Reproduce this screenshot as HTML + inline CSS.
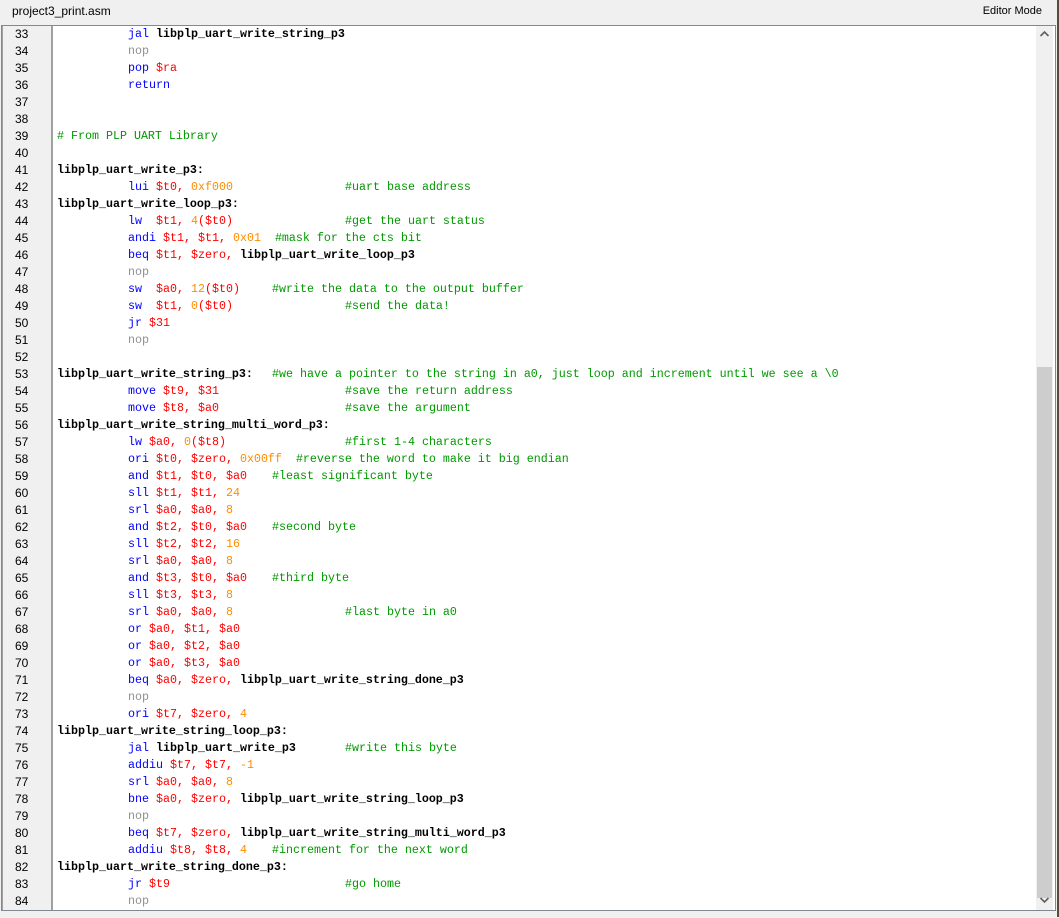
<!DOCTYPE html>
<html><head><meta charset="utf-8"><style>
*{margin:0;padding:0;box-sizing:border-box}
body{width:1059px;height:917px;background:#f0f0f0;position:relative;overflow:hidden;font-family:"Liberation Sans",sans-serif}
#title{position:absolute;left:12px;top:4px;font-size:12px;color:#000}
#mode{position:absolute;right:17px;top:5px;font-size:11px;color:#000}
#frame{position:absolute;left:1px;top:25px;width:1055px;height:886px;border:1px solid #828790;background:#fff}
#gut{position:absolute;left:2px;top:26px;width:51px;height:884px;background:#f0f0f0;border-left:1px solid #a0a0a0;border-right:2px solid #a0a0a0}
.ln{position:absolute;left:0;width:100%;height:17px;line-height:17px;font:12px "Liberation Sans",sans-serif;color:#000;padding-left:12px;transform:translateY(1px)}
#code{position:absolute;left:0;top:1px;width:1059px;height:917px}
.cl{position:absolute;left:57px;height:17px;line-height:17px;font-family:"Liberation Mono",monospace;font-size:11.67px;white-space:pre;color:#000}
.i{color:#0000ff}.r{color:#ff0000}.n{color:#ff8c00}.c{color:#009900}.p{color:#909090}.l{font-weight:bold}
#sb{position:absolute;left:1036px;top:26px;width:17px;height:884px;background:#f0f0f0}
#th{position:absolute;left:1037px;top:367px;width:15px;height:531px;background:#cdcdcd}
#rb{position:absolute;left:1057px;top:0;width:2px;height:917px;background:#5a4a3a}
</style></head><body>
<div id="title">project3_print.asm</div><div id="mode">Editor Mode</div>
<div id="frame"></div>
<div id="gut">
<div class="ln" style="top:0">33</div><div class="ln" style="top:17px">34</div><div class="ln" style="top:34px">35</div><div class="ln" style="top:51px">36</div><div class="ln" style="top:68px">37</div><div class="ln" style="top:85px">38</div><div class="ln" style="top:102px">39</div><div class="ln" style="top:119px">40</div><div class="ln" style="top:136px">41</div><div class="ln" style="top:153px">42</div><div class="ln" style="top:170px">43</div><div class="ln" style="top:187px">44</div><div class="ln" style="top:204px">45</div><div class="ln" style="top:221px">46</div><div class="ln" style="top:238px">47</div><div class="ln" style="top:255px">48</div><div class="ln" style="top:272px">49</div><div class="ln" style="top:289px">50</div><div class="ln" style="top:306px">51</div><div class="ln" style="top:323px">52</div><div class="ln" style="top:340px">53</div><div class="ln" style="top:357px">54</div><div class="ln" style="top:374px">55</div><div class="ln" style="top:391px">56</div><div class="ln" style="top:408px">57</div><div class="ln" style="top:425px">58</div><div class="ln" style="top:442px">59</div><div class="ln" style="top:459px">60</div><div class="ln" style="top:476px">61</div><div class="ln" style="top:493px">62</div><div class="ln" style="top:510px">63</div><div class="ln" style="top:527px">64</div><div class="ln" style="top:544px">65</div><div class="ln" style="top:561px">66</div><div class="ln" style="top:578px">67</div><div class="ln" style="top:595px">68</div><div class="ln" style="top:612px">69</div><div class="ln" style="top:629px">70</div><div class="ln" style="top:646px">71</div><div class="ln" style="top:663px">72</div><div class="ln" style="top:680px">73</div><div class="ln" style="top:697px">74</div><div class="ln" style="top:714px">75</div><div class="ln" style="top:731px">76</div><div class="ln" style="top:748px">77</div><div class="ln" style="top:765px">78</div><div class="ln" style="top:782px">79</div><div class="ln" style="top:799px">80</div><div class="ln" style="top:816px">81</div><div class="ln" style="top:833px">82</div><div class="ln" style="top:850px">83</div><div class="ln" style="top:867px">84</div>
</div>
<div id="code">
<div class="cl" style="top:25px;left:128px"><span class="i">jal</span> <span class="l">libplp_uart_write_string_p3</span></div>
<div class="cl p" style="top:42px;left:128px">nop</div>
<div class="cl" style="top:59px;left:128px"><span class="i">pop</span> <span class="r">$ra</span></div>
<div class="cl i" style="top:76px;left:128px">return</div>
<div class="cl c" style="top:127px"># From PLP UART Library</div>
<div class="cl l" style="top:161px">libplp_uart_write_p3:</div>
<div class="cl" style="top:178px;left:128px"><span class="i">lui</span> <span class="r">$t0,</span> <span class="n">0xf000</span></div><div class="cl c" style="top:178px;left:345px">#uart base address</div>
<div class="cl l" style="top:195px">libplp_uart_write_loop_p3:</div>
<div class="cl" style="top:212px;left:128px"><span class="i">lw</span>  <span class="r">$t1,</span> <span class="n">4</span><span class="r">($t0)</span></div><div class="cl c" style="top:212px;left:345px">#get the uart status</div>
<div class="cl" style="top:229px;left:128px"><span class="i">andi</span> <span class="r">$t1, $t1,</span> <span class="n">0x01</span>  <span class="c">#mask for the cts bit</span></div>
<div class="cl" style="top:246px;left:128px"><span class="i">beq</span> <span class="r">$t1, $zero,</span> <span class="l">libplp_uart_write_loop_p3</span></div>
<div class="cl p" style="top:263px;left:128px">nop</div>
<div class="cl" style="top:280px;left:128px"><span class="i">sw</span>  <span class="r">$a0,</span> <span class="n">12</span><span class="r">($t0)</span></div><div class="cl c" style="top:280px;left:272px">#write the data to the output buffer</div>
<div class="cl" style="top:297px;left:128px"><span class="i">sw</span>  <span class="r">$t1,</span> <span class="n">0</span><span class="r">($t0)</span></div><div class="cl c" style="top:297px;left:345px">#send the data!</div>
<div class="cl" style="top:314px;left:128px"><span class="i">jr</span> <span class="r">$31</span></div>
<div class="cl p" style="top:331px;left:128px">nop</div>
<div class="cl l" style="top:365px">libplp_uart_write_string_p3:</div><div class="cl c" style="top:365px;left:272px">#we have a pointer to the string in a0, just loop and increment until we see a \0</div>
<div class="cl" style="top:382px;left:128px"><span class="i">move</span> <span class="r">$t9, $31</span></div><div class="cl c" style="top:382px;left:345px">#save the return address</div>
<div class="cl" style="top:399px;left:128px"><span class="i">move</span> <span class="r">$t8, $a0</span></div><div class="cl c" style="top:399px;left:345px">#save the argument</div>
<div class="cl l" style="top:416px">libplp_uart_write_string_multi_word_p3:</div>
<div class="cl" style="top:433px;left:128px"><span class="i">lw</span> <span class="r">$a0,</span> <span class="n">0</span><span class="r">($t8)</span></div><div class="cl c" style="top:433px;left:345px">#first 1-4 characters</div>
<div class="cl" style="top:450px;left:128px"><span class="i">ori</span> <span class="r">$t0, $zero,</span> <span class="n">0x00ff</span>  <span class="c">#reverse the word to make it big endian</span></div>
<div class="cl" style="top:467px;left:128px"><span class="i">and</span> <span class="r">$t1, $t0, $a0</span></div><div class="cl c" style="top:467px;left:272px">#least significant byte</div>
<div class="cl" style="top:484px;left:128px"><span class="i">sll</span> <span class="r">$t1, $t1,</span> <span class="n">24</span></div>
<div class="cl" style="top:501px;left:128px"><span class="i">srl</span> <span class="r">$a0, $a0,</span> <span class="n">8</span></div>
<div class="cl" style="top:518px;left:128px"><span class="i">and</span> <span class="r">$t2, $t0, $a0</span></div><div class="cl c" style="top:518px;left:272px">#second byte</div>
<div class="cl" style="top:535px;left:128px"><span class="i">sll</span> <span class="r">$t2, $t2,</span> <span class="n">16</span></div>
<div class="cl" style="top:552px;left:128px"><span class="i">srl</span> <span class="r">$a0, $a0,</span> <span class="n">8</span></div>
<div class="cl" style="top:569px;left:128px"><span class="i">and</span> <span class="r">$t3, $t0, $a0</span></div><div class="cl c" style="top:569px;left:272px">#third byte</div>
<div class="cl" style="top:586px;left:128px"><span class="i">sll</span> <span class="r">$t3, $t3,</span> <span class="n">8</span></div>
<div class="cl" style="top:603px;left:128px"><span class="i">srl</span> <span class="r">$a0, $a0,</span> <span class="n">8</span></div><div class="cl c" style="top:603px;left:345px">#last byte in a0</div>
<div class="cl" style="top:620px;left:128px"><span class="i">or</span> <span class="r">$a0, $t1, $a0</span></div>
<div class="cl" style="top:637px;left:128px"><span class="i">or</span> <span class="r">$a0, $t2, $a0</span></div>
<div class="cl" style="top:654px;left:128px"><span class="i">or</span> <span class="r">$a0, $t3, $a0</span></div>
<div class="cl" style="top:671px;left:128px"><span class="i">beq</span> <span class="r">$a0, $zero,</span> <span class="l">libplp_uart_write_string_done_p3</span></div>
<div class="cl p" style="top:688px;left:128px">nop</div>
<div class="cl" style="top:705px;left:128px"><span class="i">ori</span> <span class="r">$t7, $zero,</span> <span class="n">4</span></div>
<div class="cl l" style="top:722px">libplp_uart_write_string_loop_p3:</div>
<div class="cl" style="top:739px;left:128px"><span class="i">jal</span> <span class="l">libplp_uart_write_p3</span></div><div class="cl c" style="top:739px;left:345px">#write this byte</div>
<div class="cl" style="top:756px;left:128px"><span class="i">addiu</span> <span class="r">$t7, $t7,</span> <span class="n">-1</span></div>
<div class="cl" style="top:773px;left:128px"><span class="i">srl</span> <span class="r">$a0, $a0,</span> <span class="n">8</span></div>
<div class="cl" style="top:790px;left:128px"><span class="i">bne</span> <span class="r">$a0, $zero,</span> <span class="l">libplp_uart_write_string_loop_p3</span></div>
<div class="cl p" style="top:807px;left:128px">nop</div>
<div class="cl" style="top:824px;left:128px"><span class="i">beq</span> <span class="r">$t7, $zero,</span> <span class="l">libplp_uart_write_string_multi_word_p3</span></div>
<div class="cl" style="top:841px;left:128px"><span class="i">addiu</span> <span class="r">$t8, $t8,</span> <span class="n">4</span></div><div class="cl c" style="top:841px;left:272px">#increment for the next word</div>
<div class="cl l" style="top:858px">libplp_uart_write_string_done_p3:</div>
<div class="cl" style="top:875px;left:128px"><span class="i">jr</span> <span class="r">$t9</span></div><div class="cl c" style="top:875px;left:345px">#go home</div>
<div class="cl p" style="top:892px;left:128px">nop</div>
</div>
<div id="sb"></div><div id="th"></div>
<svg style="position:absolute;left:1039px;top:30px" width="11" height="8"><path d="M1.5 6 L5.5 2 L9.5 6" fill="none" stroke="#606060" stroke-width="1.6"/></svg>
<svg style="position:absolute;left:1039px;top:896px" width="11" height="8"><path d="M1.5 2 L5.5 6 L9.5 2" fill="none" stroke="#606060" stroke-width="1.6"/></svg>
<div id="rb"></div>
</body></html>
